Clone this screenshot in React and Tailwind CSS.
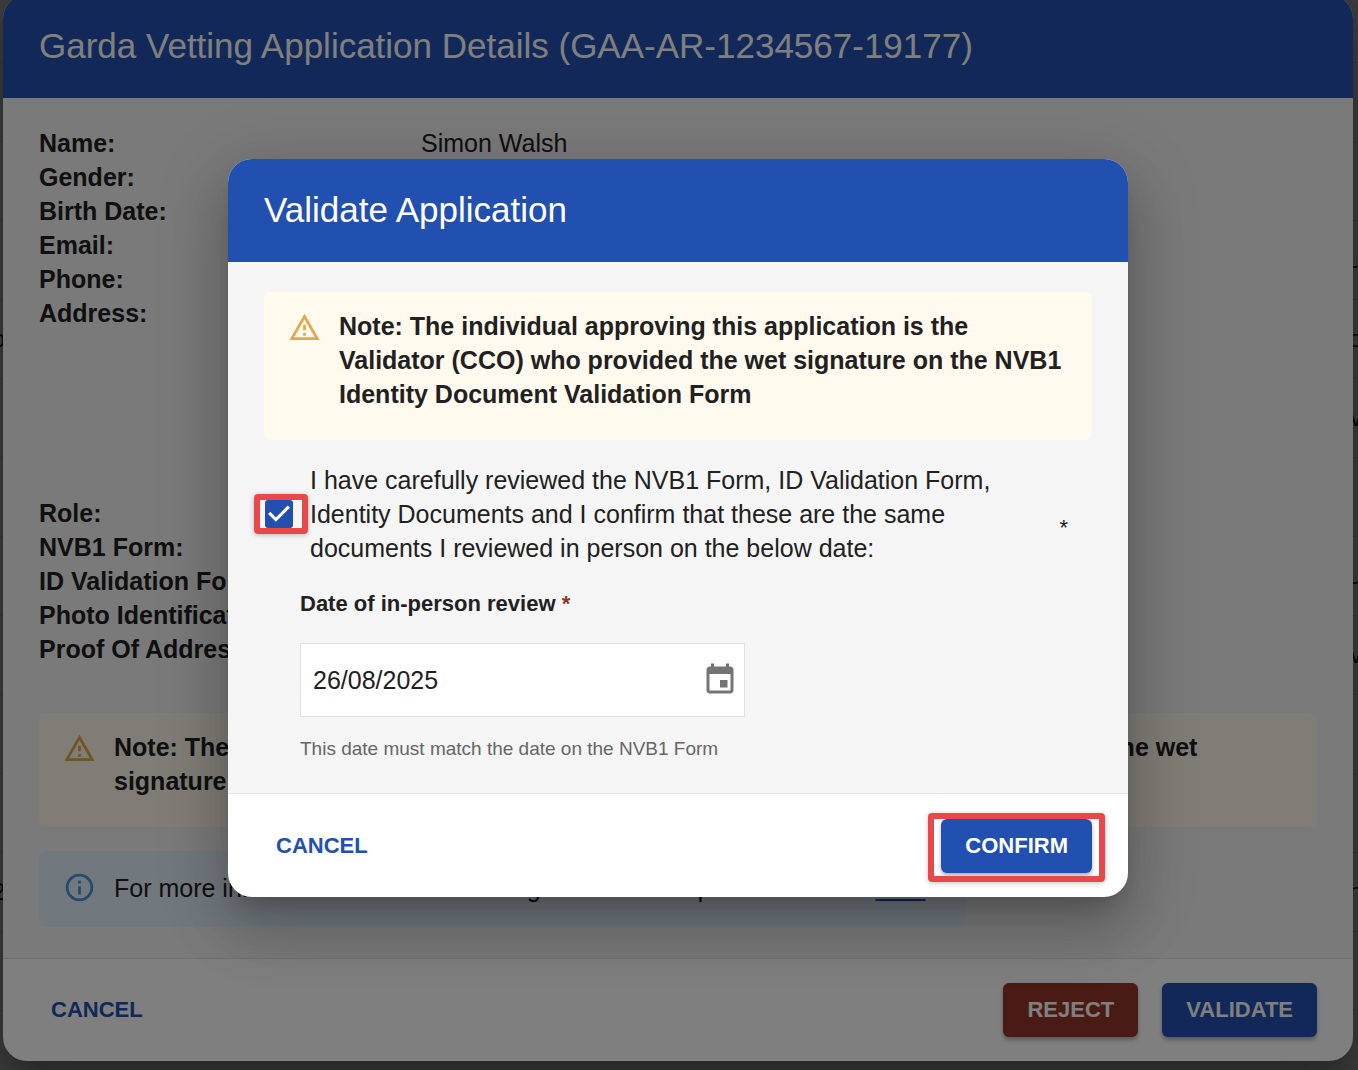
import { useState } from 'react';

const details = [
    { label: 'Name:', value: 'Simon Walsh' },
    { label: 'Gender:', value: '' },
    { label: 'Birth Date:', value: '' },
    { label: 'Email:', value: '' },
    { label: 'Phone:', value: '' },
];

const documents = ['Role:', 'NVB1 Form:', 'ID Validation Form:', 'Photo Identification:', 'Proof Of Address:'];

// Rows of the applications list behind both dialogs
const listRows = [
    ['', ''],
    ['', ''],
    ['', ''],
    ['', 'u'],
    ['o', 'o'],
    ['', 'v'],
    ['', ''],
    ['', 'u'],
    ['', 'v'],
    ['', ''],
    ['', ''],
    ['2', 'n'],
    ['', ''],
    ['', ''],
];

function WarningIcon() {
    return (
        <svg viewBox="0 0 24 24" className="mt-0.5 size-[33px] shrink-0 fill-[#e2a84b]" aria-hidden="true">
            <path d="M12 5.99L19.53 19H4.47L12 5.99M12 2L1 21h22L12 2zm1 14h-2v2h2v-2zm0-6h-2v4h2v-4z" />
        </svg>
    );
}

function InfoIcon() {
    return (
        <svg viewBox="0 0 24 24" className="size-[33px] shrink-0 fill-[#4b94d8]" aria-hidden="true">
            <path d="M11 7h2v2h-2zm0 4h2v6h-2zm1-9C6.48 2 2 6.48 2 12s4.48 10 10 10 10-4.48 10-10S17.52 2 12 2zm0 18c-4.41 0-8-3.59-8-8s3.59-8 8-8 8 3.59 8 8-3.59 8-8 8z" />
        </svg>
    );
}

function CalendarIcon() {
    return (
        <svg viewBox="0 0 24 24" className="size-9 fill-[#757575]" aria-hidden="true">
            <path d="M17 12h-5v5h5v-5zM16 1v2H8V1H6v2H5c-1.11 0-1.99.9-1.99 2L3 19c0 1.1.89 2 2 2h14c1.1 0 2-.9 2-2V5c0-1.1-.9-2-2-2h-1V1h-2zm3 18H5V8h14v11z" />
        </svg>
    );
}

function Note() {
    return (
        <div className="flex gap-[18px] rounded-md bg-[#fffaed] px-6 pt-[17px] pb-[29px]">
            <WarningIcon />
            <p className="font-bold">
                Note: The individual approving this application is the Validator (CCO) who provided the wet signature on the
                NVB1 Identity Document Validation Form
            </p>
        </div>
    );
}

function DialogTitle({ children }) {
    return <h2 className="h-[103px] bg-[#2250b0] px-9 text-[35px] leading-[101px] text-white">{children}</h2>;
}

function ApplicationList() {
    return (
        <div className="absolute inset-0 overflow-hidden bg-[#f5f5f5] text-[24px]" aria-hidden="true">
            <div className="-mt-4">
                {listRows.map(([left, right], i) => (
                    <div key={i} className="flex h-[79px] items-center justify-between border-b border-[#dddddd]">
                        <span className="-ml-2">{left}</span>
                        <span className="-mr-1">{right}</span>
                    </div>
                ))}
            </div>
        </div>
    );
}

function DetailsDialog() {
    return (
        <section className="relative mr-[5px] ml-[3px] -mt-[5px] overflow-hidden rounded-3xl bg-white shadow-[0_16px_22px_-10px_rgba(0,0,0,0.2),0_36px_57px_4px_rgba(0,0,0,0.14),0_14px_69px_12px_rgba(0,0,0,0.12)]">
            <DialogTitle>Garda Vetting Application Details (GAA-AR-1234567-19177)</DialogTitle>
            <div className="border-b border-[#e0e0e0] bg-[#f5f5f5] px-9 pt-7 pb-[31px]">
                <dl>
                    {details.map((item) => (
                        <div key={item.label} className="flex">
                            <dt className="w-[382px] font-bold">{item.label}</dt>
                            <dd>{item.value}</dd>
                        </div>
                    ))}
                    <div className="flex h-[200px]">
                        <dt className="w-[382px] font-bold">Address:</dt>
                        <dd />
                    </div>
                    {documents.map((label) => (
                        <div key={label} className="flex">
                            <dt className="w-[382px] font-bold">{label}</dt>
                            <dd />
                        </div>
                    ))}
                </dl>
                <div className="mt-[47px]">
                    <Note />
                </div>
                <div className="mt-6 flex w-fit items-start gap-[18px] rounded-md bg-[#e4f3fc] pt-5 pr-10 pb-[22px] pl-6">
                    <InfoIcon />
                    <p>
                        For more information on Garda Vetting Invitations requirements click{' '}
                        <a href="#" className="text-[#2250b0] underline">
                            here
                        </a>
                    </p>
                </div>
            </div>
            <footer className="flex items-center px-9 py-6">
                <button type="button" className="h-[54px] px-3 text-[22px] font-bold text-[#2250b0]">
                    CANCEL
                </button>
                <button
                    type="button"
                    className="ml-auto h-[54px] rounded-md bg-[#943428] px-6 text-[22px] font-bold text-white shadow-[0_3px_4px_rgba(0,0,0,0.3)]"
                >
                    REJECT
                </button>
                <button
                    type="button"
                    className="ml-6 h-[54px] rounded-md bg-[#2250b0] px-6 text-[22px] font-bold text-white shadow-[0_3px_4px_rgba(0,0,0,0.3)]"
                >
                    VALIDATE
                </button>
            </footer>
        </section>
    );
}

function ValidateDialog() {
    const [confirmed, setConfirmed] = useState(true);
    const [date, setDate] = useState('26/08/2025');

    return (
        <section
            role="dialog"
            aria-label="Validate Application"
            className="w-full max-w-[900px] overflow-hidden rounded-3xl bg-white shadow-[0_16px_22px_-10px_rgba(0,0,0,0.2),0_36px_57px_4px_rgba(0,0,0,0.14),0_14px_69px_12px_rgba(0,0,0,0.12)]"
        >
            <DialogTitle>Validate Application</DialogTitle>
            <div className="border-b border-[#e4e4e4] bg-[#f5f5f5] px-9 pt-[30px] pb-[29px]">
                <Note />

                <div className="mt-[23px] flex items-center">
                    <div className="relative ml-px size-7 shrink-0">
                        <input
                            id="reviewed"
                            type="checkbox"
                            checked={confirmed}
                            onChange={(e) => setConfirmed(e.target.checked)}
                            className="peer block size-7 appearance-none rounded-[3px] border-2 border-[#2250b0] bg-white checked:bg-[#2250b0]"
                        />
                        <svg
                            viewBox="3 3 18 18"
                            className="pointer-events-none absolute inset-0 hidden size-7 fill-white peer-checked:block"
                            aria-hidden="true"
                        >
                            <path d="M10 17l-5-5 1.41-1.41L10 14.17l7.59-7.59L19 8l-9 9z" />
                        </svg>
                        <div className="pointer-events-none absolute -top-[6px] -right-[15px] -bottom-[6px] -left-[11px] rounded border-[6px] border-[#e8484a] shadow-[0_1px_5px_rgba(0,0,0,0.25)]" />
                    </div>
                    <label htmlFor="reviewed" className="ml-[17px] w-[729px]">
                        I have carefully reviewed the NVB1 Form, ID Validation Form, Identity Documents and I confirm that
                        these are the same documents I reviewed in person on the below date:
                    </label>
                    <span className="mt-7 ml-auto pr-6 text-[22px]">*</span>
                </div>

                <div className="mt-[23px] ml-9">
                    <label htmlFor="review-date" className="block text-[22px] leading-8 font-bold">
                        Date of in-person review <span className="text-[#943428]">*</span>
                    </label>
                    <div className="mt-[23px] flex h-[74px] max-w-[445px] items-center border border-[#e2e2e2] bg-white pr-1.5 pl-3">
                        <input
                            id="review-date"
                            type="text"
                            value={date}
                            onChange={(e) => setDate(e.target.value)}
                            className="h-full min-w-0 flex-1 bg-transparent outline-none"
                        />
                        <button type="button" aria-label="Choose date">
                            <CalendarIcon />
                        </button>
                    </div>
                    <p className="mt-[17px] text-[19px] leading-[30px] text-[#666666]">
                        This date must match the date on the NVB1 Form
                    </p>
                </div>
            </div>
            <footer className="flex items-center justify-between px-9 pt-[25px] pb-6">
                <button type="button" className="h-[54px] px-3 text-[22px] font-bold text-[#2250b0]">
                    CANCEL
                </button>
                <div className="relative">
                    <button
                        type="button"
                        className="block h-[54px] rounded-md bg-[#2250b0] px-6 text-[22px] font-bold text-white shadow-[0_3px_4px_rgba(0,0,0,0.3)]"
                    >
                        CONFIRM
                    </button>
                    <div className="pointer-events-none absolute -inset-x-[13px] -top-[6px] -bottom-[9px] rounded border-[6px] border-[#e8484a] shadow-[0_1px_5px_rgba(0,0,0,0.25)]" />
                </div>
            </footer>
        </section>
    );
}

export default function App() {
    return (
        <main className="relative min-h-screen overflow-hidden font-['Liberation_Sans',Arial,sans-serif] text-[25px] leading-[34px] text-[#212121]">
            <ApplicationList />
            <div className="absolute inset-0 bg-black/50" />
            <DetailsDialog />
            <div className="absolute inset-0 flex items-start justify-center bg-black/50 pt-[159px] pr-0.5">
                <ValidateDialog />
            </div>
        </main>
    );
}
